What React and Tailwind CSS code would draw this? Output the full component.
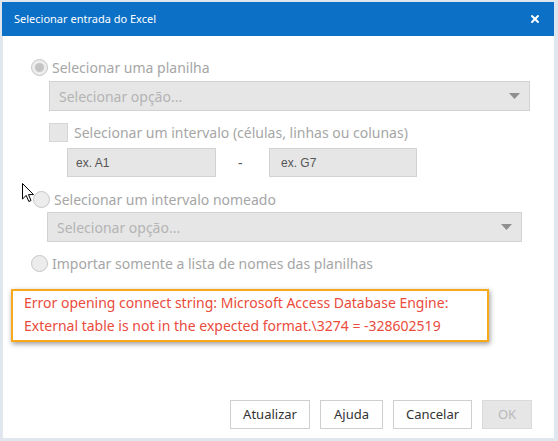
import { X } from "lucide-react";

const Radio = ({ checked }) => (
    <span className="w-[17px] h-[17px] rounded-full border border-[#c6c6c6] bg-[#ececec] flex items-center justify-center shrink-0">
        {checked && <span className="w-[9px] h-[9px] rounded-full bg-[#c4c4c4]" />}
    </span>
);

const Select = ({ className }) => (
    <div className={`h-[30px] bg-[#e6e6e6] border border-[#d2d2d2] flex items-center justify-between pl-[9px] pr-[9px] ${className}`}>
        <span className="text-[14px] text-[#b4b4b4]">Selecionar opção...</span>
        <svg width="11" height="6" viewBox="0 0 11 6">
            <path d="M0 0 H11 L5.5 6 Z" fill="#8f8f8f" />
        </svg>
    </div>
);

const Button = ({ children, disabled, className }) => (
    <button
        disabled={disabled}
        className={`h-[29px] border text-[13px] flex items-center justify-center ${disabled ? "bg-[#e6e6e6] border-[#dadada] text-[#b8b8b8]" : "bg-white border-[#cfcfcf] text-[#333]"} ${className}`}
    >
        {children}
    </button>
);

const Cursor = () => (
    <svg className="absolute left-[22px] top-[183px]" width="13" height="20" viewBox="0 0 13 20">
        <path d="M0.5 0.5 V16 L4.2 12.4 L6.8 18.5 L9 17.5 L6.5 11.6 H11.5 Z" fill="white" stroke="black" strokeWidth="1" strokeLinejoin="round" />
    </svg>
);

export default function App() {
    return (
        <div
            className="relative w-[558px] h-[441px] bg-[#dfe6ee] pl-[2px] pt-[2px] pr-[4px] pb-[3px] flex flex-col"
            style={{ fontFamily: '"Noto Sans", "Open Sans", sans-serif' }}
        >
            <div className="h-[34px] bg-[#0c70c6] flex items-center justify-between pl-[12px] pr-[13px] shrink-0">
                <span className="text-[11px] text-white">Selecionar entrada do Excel</span>
                <X size={12} strokeWidth={4} className="text-white" />
            </div>

            <div className="flex-1 bg-white border-l border-[#e3e8ee] flex flex-col">
                <div className="mt-[21px] ml-[28px] h-[20px] flex items-center gap-[4px]">
                    <Radio checked />
                    <span className="text-[14px] text-[#a6a6a6]">Selecionar uma planilha</span>
                </div>

                <Select className="mt-[4px] ml-[46px] w-[481px]" />

                <div className="mt-[11px] ml-[46px] h-[20px] flex items-center gap-[6px]">
                    <span className="w-[19px] h-[19px] bg-[#e6e6e6] border border-[#d6d6d6]" />
                    <span className="text-[14px] text-[#a6a6a6]">Selecionar um intervalo (células, linhas ou colunas)</span>
                </div>

                <div className="mt-[6px] ml-[64px] h-[29px] flex items-center">
                    <div className="w-[149px] h-full bg-[#e6e6e6] border border-[#d2d2d2] flex items-center pl-[8px] text-[12px] text-[#555]" style={{ fontFamily: '"Liberation Sans", Arial, sans-serif' }}>
                        ex. A1
                    </div>
                    <span className="w-[53px] pl-[22px] text-[14px] text-[#555]">-</span>
                    <div className="w-[148px] h-full bg-[#e6e6e6] border border-[#d2d2d2] flex items-center pl-[11px] text-[12px] text-[#555]" style={{ fontFamily: '"Liberation Sans", Arial, sans-serif' }}>
                        ex. G7
                    </div>
                </div>

                <div className="mt-[12px] ml-[30px] h-[20px] flex items-center gap-[4px]">
                    <Radio />
                    <span className="text-[14px] text-[#a6a6a6]">Selecionar um intervalo nomeado</span>
                </div>

                <Select className="mt-[3px] ml-[44px] w-[475px]" />

                <div className="mt-[11px] ml-[28px] h-[20px] flex items-center gap-[4px]">
                    <Radio />
                    <span className="text-[14px] text-[#a6a6a6]">Importar somente a lista de nomes das planilhas</span>
                </div>

                <div className="mt-[16px] ml-[8px] w-[478px] h-[53px] border-2 border-[#f7a81b] shadow-[1px_2px_5px_rgba(0,0,0,0.4)] flex flex-col justify-center pl-[11px] pb-[3px] text-[14px] leading-[23px] text-[#ea4b3c]">
                    <span>Error opening connect string: Microsoft Access Database Engine:</span>
                    <span>External table is not in the expected format.\3274 = -328602519</span>
                </div>

                <div className="mt-auto mb-[9px] flex justify-end gap-[10px] pr-[22px]">
                    <Button className="w-[80px]">Atualizar</Button>
                    <Button className="w-[63px]">Ajuda</Button>
                    <Button className="w-[79px]">Cancelar</Button>
                    <Button disabled className="w-[50px]">OK</Button>
                </div>
            </div>

            <Cursor />
        </div>
    );
}
